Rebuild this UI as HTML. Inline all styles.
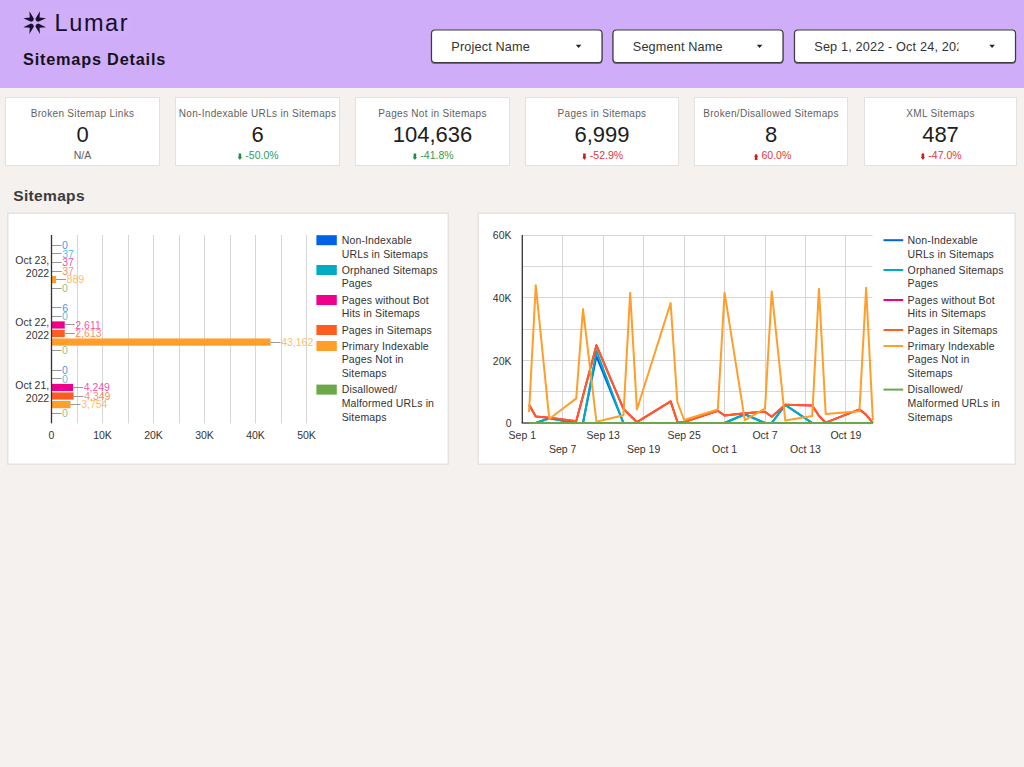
<!DOCTYPE html><html><head><meta charset="utf-8"><style>
html,body{margin:0;padding:0;width:1024px;height:767px;overflow:hidden;background:#f5f1ee;}
svg{display:block;font-family:"Liberation Sans", sans-serif;}
</style></head><body>
<svg width="1024" height="767" viewBox="0 0 1024 767">
<defs><filter id="sh" x="-5%" y="-20%" width="110%" height="150%"><feDropShadow dx="0" dy="1" stdDeviation="0.6" flood-color="#000" flood-opacity="0.45"/></filter></defs>
<rect x="0" y="0" width="1024" height="767" fill="#f5f1ee"/>
<rect x="0" y="0" width="1024" height="88" fill="#cfadf8"/>
<rect x="21" y="9.5" width="109" height="26.5" fill="#d0aff8"/>
<path d="M29.39,11.33 L33.92,18.77 Q33.77,21.47 31.07,21.87 L23.33,18.17 L29.77,17.57 Z" fill="#1a0f2e"/>
<path d="M39.95,11.33 L35.42,18.77 Q35.57,21.47 38.27,21.87 L46.01,18.17 L39.57,17.57 Z" fill="#1a0f2e"/>
<path d="M29.39,34.01 L33.92,26.57 Q33.77,23.87 31.07,23.47 L23.33,27.17 L29.77,27.77 Z" fill="#1a0f2e"/>
<path d="M39.95,34.01 L35.42,26.57 Q35.57,23.87 38.27,23.47 L46.01,27.17 L39.57,27.77 Z" fill="#1a0f2e"/>
<text x="54.6" y="30.8" font-size="23.5" fill="#150d2c" font-weight="normal" text-anchor="start" letter-spacing="1.6" >Lumar</text>
<text x="23" y="65.3" font-size="16.3" fill="#14121c" font-weight="bold" text-anchor="start" letter-spacing="0.8" >Sitemaps Details</text>
<rect x="431.5" y="30" width="170.5" height="32.5" rx="3.5" fill="#ffffff" stroke="#3d3d3d" stroke-width="1.2" filter="url(#sh)"/>
<clipPath id="c431"><rect x="436.5" y="30" width="108.5" height="32"/></clipPath>
<g clip-path="url(#c431)"><text x="451.3" y="51" font-size="12.7" fill="#333333" font-weight="normal" text-anchor="start" letter-spacing="0.15" >Project Name</text></g>
<path d="M575.8000000000001,44.8 L581.4,44.8 L578.6,48 Z" fill="#222"/>
<rect x="613" y="30" width="170" height="32.5" rx="3.5" fill="#ffffff" stroke="#3d3d3d" stroke-width="1.2" filter="url(#sh)"/>
<clipPath id="c613"><rect x="618" y="30" width="108" height="32"/></clipPath>
<g clip-path="url(#c613)"><text x="632.8" y="51" font-size="12.7" fill="#333333" font-weight="normal" text-anchor="start" letter-spacing="0.15" >Segment Name</text></g>
<path d="M756.8000000000001,44.8 L762.4,44.8 L759.6,48 Z" fill="#222"/>
<rect x="794.5" y="30" width="221.0" height="32.5" rx="3.5" fill="#ffffff" stroke="#3d3d3d" stroke-width="1.2" filter="url(#sh)"/>
<clipPath id="c794"><rect x="799.5" y="30" width="159.0" height="32"/></clipPath>
<g clip-path="url(#c794)"><text x="814.3" y="51" font-size="12.7" fill="#333333" font-weight="normal" text-anchor="start" letter-spacing="0.15" >Sep 1, 2022 - Oct 24, 2022</text></g>
<path d="M989.3000000000001,44.8 L994.9,44.8 L992.1,48 Z" fill="#222"/>
<rect x="5.5" y="97.5" width="154" height="68" fill="#fff" stroke="#e2e2e2" stroke-width="1"/>
<text x="82.5" y="116.6" font-size="10" fill="#5f5f5f" font-weight="normal" text-anchor="middle" letter-spacing="0.32" >Broken Sitemap Links</text>
<text x="82.5" y="142.3" font-size="22" fill="#202020" font-weight="normal" text-anchor="middle" letter-spacing="0" >0</text>
<text x="82.5" y="159" font-size="10.5" fill="#5a5a5a" font-weight="normal" text-anchor="middle" letter-spacing="0" >N/A</text>
<rect x="175.5" y="97.5" width="164" height="68" fill="#fff" stroke="#e2e2e2" stroke-width="1"/>
<text x="257.5" y="116.6" font-size="10" fill="#5f5f5f" font-weight="normal" text-anchor="middle" letter-spacing="0.32" >Non-Indexable URLs in Sitemaps</text>
<text x="257.5" y="142.3" font-size="22" fill="#202020" font-weight="normal" text-anchor="middle" letter-spacing="0" >6</text>
<text x="245.3" y="159" font-size="10.5" fill="#2f9a55" font-weight="normal" text-anchor="start" letter-spacing="0" >-50.0%</text>
<path d="M238.60000000000002,153.6 h2.6 v3.3 h0.8 l-2.1,3.2 l-2.1,-3.2 h0.8 z" fill="#1e8e3e"/>
<rect x="355.5" y="97.5" width="154" height="68" fill="#fff" stroke="#e2e2e2" stroke-width="1"/>
<text x="432.5" y="116.6" font-size="10" fill="#5f5f5f" font-weight="normal" text-anchor="middle" letter-spacing="0.32" >Pages Not in Sitemaps</text>
<text x="432.5" y="142.3" font-size="22" fill="#202020" font-weight="normal" text-anchor="middle" letter-spacing="0" >104,636</text>
<text x="420.3" y="159" font-size="10.5" fill="#2f9a55" font-weight="normal" text-anchor="start" letter-spacing="0" >-41.8%</text>
<path d="M413.6,153.6 h2.6 v3.3 h0.8 l-2.1,3.2 l-2.1,-3.2 h0.8 z" fill="#1e8e3e"/>
<rect x="525.5" y="97.5" width="153" height="68" fill="#fff" stroke="#e2e2e2" stroke-width="1"/>
<text x="602.0" y="116.6" font-size="10" fill="#5f5f5f" font-weight="normal" text-anchor="middle" letter-spacing="0.32" >Pages in Sitemaps</text>
<text x="602.0" y="142.3" font-size="22" fill="#202020" font-weight="normal" text-anchor="middle" letter-spacing="0" >6,999</text>
<text x="589.8" y="159" font-size="10.5" fill="#e2363c" font-weight="normal" text-anchor="start" letter-spacing="0" >-52.9%</text>
<path d="M583.0999999999999,153.6 h2.6 v3.3 h0.8 l-2.1,3.2 l-2.1,-3.2 h0.8 z" fill="#c8201f"/>
<rect x="694.5" y="97.5" width="153" height="68" fill="#fff" stroke="#e2e2e2" stroke-width="1"/>
<text x="771.0" y="116.6" font-size="10" fill="#5f5f5f" font-weight="normal" text-anchor="middle" letter-spacing="0.32" >Broken/Disallowed Sitemaps</text>
<text x="771.0" y="142.3" font-size="22" fill="#202020" font-weight="normal" text-anchor="middle" letter-spacing="0" >8</text>
<text x="761.5" y="159" font-size="10.5" fill="#e2363c" font-weight="normal" text-anchor="start" letter-spacing="0" >60.0%</text>
<path d="M754.8,160.1 h2.6 v-3.3 h0.8 l-2.1,-3.2 l-2.1,3.2 h0.8 z" fill="#c8201f"/>
<rect x="864.5" y="97.5" width="152" height="68" fill="#fff" stroke="#e2e2e2" stroke-width="1"/>
<text x="940.5" y="116.6" font-size="10" fill="#5f5f5f" font-weight="normal" text-anchor="middle" letter-spacing="0.32" >XML Sitemaps</text>
<text x="940.5" y="142.3" font-size="22" fill="#202020" font-weight="normal" text-anchor="middle" letter-spacing="0" >487</text>
<text x="928.3" y="159" font-size="10.5" fill="#e2363c" font-weight="normal" text-anchor="start" letter-spacing="0" >-47.0%</text>
<path d="M921.5999999999999,153.6 h2.6 v3.3 h0.8 l-2.1,3.2 l-2.1,-3.2 h0.8 z" fill="#c8201f"/>
<text x="13.2" y="201" font-size="15.5" fill="#3b3b3b" font-weight="bold" text-anchor="start" letter-spacing="0.35" >Sitemaps</text>
<rect x="7.75" y="213.25" width="440.5" height="251" fill="#fff" stroke="#e4e4e4" stroke-width="1.5"/>
<rect x="478.25" y="213.25" width="537" height="251" fill="#fff" stroke="#e4e4e4" stroke-width="1.5"/>
<line x1="77.5" y1="235.0" x2="77.5" y2="423.4" stroke="#d6d6d6" stroke-width="1"/>
<line x1="102.5" y1="235.0" x2="102.5" y2="423.4" stroke="#d6d6d6" stroke-width="1"/>
<line x1="128.5" y1="235.0" x2="128.5" y2="423.4" stroke="#d6d6d6" stroke-width="1"/>
<line x1="153.5" y1="235.0" x2="153.5" y2="423.4" stroke="#d6d6d6" stroke-width="1"/>
<line x1="179.5" y1="235.0" x2="179.5" y2="423.4" stroke="#d6d6d6" stroke-width="1"/>
<line x1="204.5" y1="235.0" x2="204.5" y2="423.4" stroke="#d6d6d6" stroke-width="1"/>
<line x1="230.5" y1="235.0" x2="230.5" y2="423.4" stroke="#d6d6d6" stroke-width="1"/>
<line x1="255.5" y1="235.0" x2="255.5" y2="423.4" stroke="#d6d6d6" stroke-width="1"/>
<line x1="281.5" y1="235.0" x2="281.5" y2="423.4" stroke="#d6d6d6" stroke-width="1"/>
<line x1="306.5" y1="235.0" x2="306.5" y2="423.4" stroke="#d6d6d6" stroke-width="1"/>
<text x="51.5" y="438.5" font-size="10.5" fill="#333" font-weight="normal" text-anchor="middle" letter-spacing="0" >0</text>
<text x="102.5" y="438.5" font-size="10.5" fill="#333" font-weight="normal" text-anchor="middle" letter-spacing="0" >10K</text>
<text x="153.5" y="438.5" font-size="10.5" fill="#333" font-weight="normal" text-anchor="middle" letter-spacing="0" >20K</text>
<text x="204.5" y="438.5" font-size="10.5" fill="#333" font-weight="normal" text-anchor="middle" letter-spacing="0" >30K</text>
<text x="255.5" y="438.5" font-size="10.5" fill="#333" font-weight="normal" text-anchor="middle" letter-spacing="0" >40K</text>
<text x="306.5" y="438.5" font-size="10.5" fill="#333" font-weight="normal" text-anchor="middle" letter-spacing="0" >50K</text>
<text x="49.2" y="263.75" font-size="10.5" fill="#333" font-weight="normal" text-anchor="end" letter-spacing="0" >Oct 23,</text>
<text x="49.2" y="276.95" font-size="10.5" fill="#333" font-weight="normal" text-anchor="end" letter-spacing="0" >2022</text>
<line x1="51.50" y1="245.50" x2="61.50" y2="245.50" stroke="#999" stroke-width="1"/>
<text x="62.10" y="249.07" font-size="10.5" fill="#0062e6" font-weight="normal" text-anchor="start" letter-spacing="0" fill-opacity="0.72">0</text>
<line x1="51.69" y1="253.50" x2="61.69" y2="253.50" stroke="#999" stroke-width="1"/>
<text x="62.29" y="257.62" font-size="10.5" fill="#00acc1" font-weight="normal" text-anchor="start" letter-spacing="0" fill-opacity="0.72">37</text>
<line x1="51.69" y1="262.50" x2="61.69" y2="262.50" stroke="#999" stroke-width="1"/>
<text x="62.29" y="266.18" font-size="10.5" fill="#f0008a" font-weight="normal" text-anchor="start" letter-spacing="0" fill-opacity="0.72">37</text>
<line x1="51.69" y1="271.50" x2="61.69" y2="271.50" stroke="#999" stroke-width="1"/>
<text x="62.29" y="274.72" font-size="10.5" fill="#ff5c1f" font-weight="normal" text-anchor="start" letter-spacing="0" fill-opacity="0.72">37</text>
<rect x="51.5" y="275.97" width="4.51" height="7.2" fill="#ff9e2a"/>
<line x1="56.01" y1="279.50" x2="66.01" y2="279.50" stroke="#999" stroke-width="1"/>
<text x="66.61" y="283.27" font-size="10.5" fill="#ff9e2a" font-weight="normal" text-anchor="start" letter-spacing="0" fill-opacity="0.72">889</text>
<line x1="51.50" y1="288.50" x2="61.50" y2="288.50" stroke="#999" stroke-width="1"/>
<text x="62.10" y="291.82" font-size="10.5" fill="#6aa84a" font-weight="normal" text-anchor="start" letter-spacing="0" fill-opacity="0.72">0</text>
<text x="49.2" y="326.25" font-size="10.5" fill="#333" font-weight="normal" text-anchor="end" letter-spacing="0" >Oct 22,</text>
<text x="49.2" y="339.45" font-size="10.5" fill="#333" font-weight="normal" text-anchor="end" letter-spacing="0" >2022</text>
<line x1="51.53" y1="307.50" x2="61.53" y2="307.50" stroke="#999" stroke-width="1"/>
<text x="62.13" y="311.57" font-size="10.5" fill="#0062e6" font-weight="normal" text-anchor="start" letter-spacing="0" fill-opacity="0.72">6</text>
<line x1="51.50" y1="316.50" x2="61.50" y2="316.50" stroke="#999" stroke-width="1"/>
<text x="62.10" y="320.12" font-size="10.5" fill="#00acc1" font-weight="normal" text-anchor="start" letter-spacing="0" fill-opacity="0.72">0</text>
<rect x="51.5" y="321.38" width="13.25" height="7.2" fill="#f0008a"/>
<line x1="64.75" y1="324.50" x2="74.75" y2="324.50" stroke="#999" stroke-width="1"/>
<text x="75.35" y="328.68" font-size="10.5" fill="#f0008a" font-weight="normal" text-anchor="start" letter-spacing="0" fill-opacity="0.72">2,611</text>
<rect x="51.5" y="329.92" width="13.26" height="7.2" fill="#ff5c1f"/>
<line x1="64.76" y1="333.50" x2="74.76" y2="333.50" stroke="#999" stroke-width="1"/>
<text x="75.36" y="337.22" font-size="10.5" fill="#ff5c1f" font-weight="normal" text-anchor="start" letter-spacing="0" fill-opacity="0.72">2,613</text>
<rect x="51.5" y="338.47" width="219.05" height="7.2" fill="#ff9e2a"/>
<line x1="270.55" y1="342.50" x2="280.55" y2="342.50" stroke="#999" stroke-width="1"/>
<text x="281.15" y="345.77" font-size="10.5" fill="#ff9e2a" font-weight="normal" text-anchor="start" letter-spacing="0" fill-opacity="0.72">43,162</text>
<line x1="51.50" y1="350.50" x2="61.50" y2="350.50" stroke="#999" stroke-width="1"/>
<text x="62.10" y="354.32" font-size="10.5" fill="#6aa84a" font-weight="normal" text-anchor="start" letter-spacing="0" fill-opacity="0.72">0</text>
<text x="49.2" y="388.75" font-size="10.5" fill="#333" font-weight="normal" text-anchor="end" letter-spacing="0" >Oct 21,</text>
<text x="49.2" y="401.95" font-size="10.5" fill="#333" font-weight="normal" text-anchor="end" letter-spacing="0" >2022</text>
<line x1="51.50" y1="370.50" x2="61.50" y2="370.50" stroke="#999" stroke-width="1"/>
<text x="62.10" y="374.07" font-size="10.5" fill="#0062e6" font-weight="normal" text-anchor="start" letter-spacing="0" fill-opacity="0.72">0</text>
<line x1="51.50" y1="378.50" x2="61.50" y2="378.50" stroke="#999" stroke-width="1"/>
<text x="62.10" y="382.62" font-size="10.5" fill="#00acc1" font-weight="normal" text-anchor="start" letter-spacing="0" fill-opacity="0.72">0</text>
<rect x="51.5" y="383.88" width="21.56" height="7.2" fill="#f0008a"/>
<line x1="73.06" y1="387.50" x2="83.06" y2="387.50" stroke="#999" stroke-width="1"/>
<text x="83.66" y="391.18" font-size="10.5" fill="#f0008a" font-weight="normal" text-anchor="start" letter-spacing="0" fill-opacity="0.72">4,249</text>
<rect x="51.5" y="392.42" width="22.07" height="7.2" fill="#ff5c1f"/>
<line x1="73.57" y1="396.50" x2="83.57" y2="396.50" stroke="#999" stroke-width="1"/>
<text x="84.17" y="399.72" font-size="10.5" fill="#ff5c1f" font-weight="normal" text-anchor="start" letter-spacing="0" fill-opacity="0.72">4,349</text>
<rect x="51.5" y="400.97" width="19.05" height="7.2" fill="#ff9e2a"/>
<line x1="70.55" y1="404.50" x2="80.55" y2="404.50" stroke="#999" stroke-width="1"/>
<text x="81.15" y="408.27" font-size="10.5" fill="#ff9e2a" font-weight="normal" text-anchor="start" letter-spacing="0" fill-opacity="0.72">3,754</text>
<line x1="51.50" y1="413.50" x2="61.50" y2="413.50" stroke="#999" stroke-width="1"/>
<text x="62.10" y="416.82" font-size="10.5" fill="#6aa84a" font-weight="normal" text-anchor="start" letter-spacing="0" fill-opacity="0.72">0</text>
<line x1="51.5" y1="235.0" x2="51.5" y2="423.4" stroke="#333" stroke-width="1.3"/>
<rect x="316.4" y="235.2" width="20.4" height="10" fill="#0062e6"/>
<text x="341.7" y="243.80" font-size="10.5" fill="#333" font-weight="normal" text-anchor="start" letter-spacing="0.15" >Non-Indexable</text>
<text x="341.7" y="257.50" font-size="10.5" fill="#333" font-weight="normal" text-anchor="start" letter-spacing="0.15" >URLs in Sitemaps</text>
<line x1="883.5" y1="240.2" x2="903.2" y2="240.2" stroke="#0062e6" stroke-width="2"/>
<text x="907.6" y="243.80" font-size="10.5" fill="#333" font-weight="normal" text-anchor="start" letter-spacing="0.15" >Non-Indexable</text>
<text x="907.6" y="257.50" font-size="10.5" fill="#333" font-weight="normal" text-anchor="start" letter-spacing="0.15" >URLs in Sitemaps</text>
<rect x="316.4" y="265" width="20.4" height="10" fill="#00acc1"/>
<text x="341.7" y="273.60" font-size="10.5" fill="#333" font-weight="normal" text-anchor="start" letter-spacing="0.15" >Orphaned Sitemaps</text>
<text x="341.7" y="287.30" font-size="10.5" fill="#333" font-weight="normal" text-anchor="start" letter-spacing="0.15" >Pages</text>
<line x1="883.5" y1="270" x2="903.2" y2="270" stroke="#00acc1" stroke-width="2"/>
<text x="907.6" y="273.60" font-size="10.5" fill="#333" font-weight="normal" text-anchor="start" letter-spacing="0.15" >Orphaned Sitemaps</text>
<text x="907.6" y="287.30" font-size="10.5" fill="#333" font-weight="normal" text-anchor="start" letter-spacing="0.15" >Pages</text>
<rect x="316.4" y="295" width="20.4" height="10" fill="#f0008a"/>
<text x="341.7" y="303.60" font-size="10.5" fill="#333" font-weight="normal" text-anchor="start" letter-spacing="0.15" >Pages without Bot</text>
<text x="341.7" y="317.30" font-size="10.5" fill="#333" font-weight="normal" text-anchor="start" letter-spacing="0.15" >Hits in Sitemaps</text>
<line x1="883.5" y1="300" x2="903.2" y2="300" stroke="#f0008a" stroke-width="2"/>
<text x="907.6" y="303.60" font-size="10.5" fill="#333" font-weight="normal" text-anchor="start" letter-spacing="0.15" >Pages without Bot</text>
<text x="907.6" y="317.30" font-size="10.5" fill="#333" font-weight="normal" text-anchor="start" letter-spacing="0.15" >Hits in Sitemaps</text>
<rect x="316.4" y="325" width="20.4" height="10" fill="#ff5c1f"/>
<text x="341.7" y="333.60" font-size="10.5" fill="#333" font-weight="normal" text-anchor="start" letter-spacing="0.15" >Pages in Sitemaps</text>
<line x1="883.5" y1="330" x2="903.2" y2="330" stroke="#ff5c1f" stroke-width="2"/>
<text x="907.6" y="333.60" font-size="10.5" fill="#333" font-weight="normal" text-anchor="start" letter-spacing="0.15" >Pages in Sitemaps</text>
<rect x="316.4" y="341" width="20.4" height="10" fill="#ff9e2a"/>
<text x="341.7" y="349.60" font-size="10.5" fill="#333" font-weight="normal" text-anchor="start" letter-spacing="0.15" >Primary Indexable</text>
<text x="341.7" y="363.30" font-size="10.5" fill="#333" font-weight="normal" text-anchor="start" letter-spacing="0.15" >Pages Not in</text>
<text x="341.7" y="377.00" font-size="10.5" fill="#333" font-weight="normal" text-anchor="start" letter-spacing="0.15" >Sitemaps</text>
<line x1="883.5" y1="346" x2="903.2" y2="346" stroke="#ff9e2a" stroke-width="2"/>
<text x="907.6" y="349.60" font-size="10.5" fill="#333" font-weight="normal" text-anchor="start" letter-spacing="0.15" >Primary Indexable</text>
<text x="907.6" y="363.30" font-size="10.5" fill="#333" font-weight="normal" text-anchor="start" letter-spacing="0.15" >Pages Not in</text>
<text x="907.6" y="377.00" font-size="10.5" fill="#333" font-weight="normal" text-anchor="start" letter-spacing="0.15" >Sitemaps</text>
<rect x="316.4" y="384.6" width="20.4" height="10" fill="#6aa84a"/>
<text x="341.7" y="393.20" font-size="10.5" fill="#333" font-weight="normal" text-anchor="start" letter-spacing="0.15" >Disallowed/</text>
<text x="341.7" y="406.90" font-size="10.5" fill="#333" font-weight="normal" text-anchor="start" letter-spacing="0.15" >Malformed URLs in</text>
<text x="341.7" y="420.60" font-size="10.5" fill="#333" font-weight="normal" text-anchor="start" letter-spacing="0.15" >Sitemaps</text>
<line x1="883.5" y1="389.6" x2="903.2" y2="389.6" stroke="#6aa84a" stroke-width="2"/>
<text x="907.6" y="393.20" font-size="10.5" fill="#333" font-weight="normal" text-anchor="start" letter-spacing="0.15" >Disallowed/</text>
<text x="907.6" y="406.90" font-size="10.5" fill="#333" font-weight="normal" text-anchor="start" letter-spacing="0.15" >Malformed URLs in</text>
<text x="907.6" y="420.60" font-size="10.5" fill="#333" font-weight="normal" text-anchor="start" letter-spacing="0.15" >Sitemaps</text>
<line x1="522.3" y1="391.50" x2="872.5" y2="391.50" stroke="#d6d6d6" stroke-width="1"/>
<line x1="522.3" y1="360.50" x2="872.5" y2="360.50" stroke="#d6d6d6" stroke-width="1"/>
<line x1="522.3" y1="329.50" x2="872.5" y2="329.50" stroke="#d6d6d6" stroke-width="1"/>
<line x1="522.3" y1="297.50" x2="872.5" y2="297.50" stroke="#d6d6d6" stroke-width="1"/>
<line x1="522.3" y1="266.50" x2="872.5" y2="266.50" stroke="#d6d6d6" stroke-width="1"/>
<line x1="522.3" y1="235.50" x2="872.5" y2="235.50" stroke="#d6d6d6" stroke-width="1"/>
<line x1="562.50" y1="235.0" x2="562.50" y2="423.0" stroke="#d6d6d6" stroke-width="1"/>
<line x1="603.50" y1="235.0" x2="603.50" y2="423.0" stroke="#d6d6d6" stroke-width="1"/>
<line x1="643.50" y1="235.0" x2="643.50" y2="423.0" stroke="#d6d6d6" stroke-width="1"/>
<line x1="684.50" y1="235.0" x2="684.50" y2="423.0" stroke="#d6d6d6" stroke-width="1"/>
<line x1="724.50" y1="235.0" x2="724.50" y2="423.0" stroke="#d6d6d6" stroke-width="1"/>
<line x1="765.50" y1="235.0" x2="765.50" y2="423.0" stroke="#d6d6d6" stroke-width="1"/>
<line x1="805.50" y1="235.0" x2="805.50" y2="423.0" stroke="#d6d6d6" stroke-width="1"/>
<line x1="845.50" y1="235.0" x2="845.50" y2="423.0" stroke="#d6d6d6" stroke-width="1"/>
<text x="511.5" y="427.20" font-size="10.5" fill="#333" font-weight="normal" text-anchor="end" letter-spacing="0" >0</text>
<text x="511.5" y="364.53" font-size="10.5" fill="#333" font-weight="normal" text-anchor="end" letter-spacing="0" >20K</text>
<text x="511.5" y="301.87" font-size="10.5" fill="#333" font-weight="normal" text-anchor="end" letter-spacing="0" >40K</text>
<text x="511.5" y="239.20" font-size="10.5" fill="#333" font-weight="normal" text-anchor="end" letter-spacing="0" >60K</text>
<text x="522.30" y="438.7" font-size="10.5" fill="#333" font-weight="normal" text-anchor="middle" letter-spacing="0" >Sep 1</text>
<text x="603.20" y="438.7" font-size="10.5" fill="#333" font-weight="normal" text-anchor="middle" letter-spacing="0" >Sep 13</text>
<text x="684.11" y="438.7" font-size="10.5" fill="#333" font-weight="normal" text-anchor="middle" letter-spacing="0" >Sep 25</text>
<text x="765.01" y="438.7" font-size="10.5" fill="#333" font-weight="normal" text-anchor="middle" letter-spacing="0" >Oct 7</text>
<text x="845.92" y="438.7" font-size="10.5" fill="#333" font-weight="normal" text-anchor="middle" letter-spacing="0" >Oct 19</text>
<text x="562.75" y="452.8" font-size="10.5" fill="#333" font-weight="normal" text-anchor="middle" letter-spacing="0" >Sep 7</text>
<text x="643.66" y="452.8" font-size="10.5" fill="#333" font-weight="normal" text-anchor="middle" letter-spacing="0" >Sep 19</text>
<text x="724.56" y="452.8" font-size="10.5" fill="#333" font-weight="normal" text-anchor="middle" letter-spacing="0" >Oct 1</text>
<text x="805.46" y="452.8" font-size="10.5" fill="#333" font-weight="normal" text-anchor="middle" letter-spacing="0" >Oct 13</text>
<line x1="522.3" y1="235.0" x2="522.3" y2="423.0" stroke="#333" stroke-width="1.3"/>
<line x1="521.6999999999999" y1="423.0" x2="529.3" y2="423.0" stroke="#333" stroke-width="1.3"/>
<polyline points="529.04,423.00 535.78,423.00 549.27,418.30 576.24,423.00 582.98,423.00 596.46,356.26 623.43,423.00 630.17,423.00 636.91,423.00 670.62,423.00 677.37,423.00 684.11,423.00 717.82,423.00 724.56,423.00 744.79,414.23 765.01,423.00 771.75,423.00 785.24,404.83 812.21,423.00 818.95,423.00 825.69,423.00 859.40,423.00 866.14,423.00 872.88,423.00" fill="none" stroke="#0062e6" stroke-width="2" stroke-linejoin="round"/>
<polyline points="529.04,423.00 535.78,423.00 549.27,418.30 576.24,423.00 582.98,423.00 596.46,350.93 623.43,423.00 630.17,423.00 636.91,423.00 670.62,423.00 677.37,423.00 684.11,423.00 717.82,423.00 724.56,423.00 744.79,414.23 765.01,423.00 771.75,423.00 785.24,404.83 812.21,423.00 818.95,423.00 825.69,423.00 859.40,423.00 866.14,423.00 872.88,423.00" fill="none" stroke="#00acc1" stroke-width="2" stroke-linejoin="round"/>
<polyline points="529.04,404.83 535.78,416.58 549.27,417.67 576.24,421.21 582.98,395.91 596.46,345.29 623.43,408.90 630.17,415.56 636.91,422.22 670.62,401.38 677.37,421.75 684.11,422.06 717.82,410.78 724.56,415.48 744.79,413.29 765.01,411.72 771.75,416.73 785.24,404.83 812.21,405.45 818.95,415.79 825.69,422.69 859.40,409.37 866.14,414.81 872.88,422.88" fill="none" stroke="#f0008a" stroke-width="2" stroke-linejoin="round"/>
<polyline points="529.04,404.83 535.78,416.58 549.27,417.67 576.24,421.21 582.98,395.91 596.46,345.29 623.43,408.90 630.17,415.56 636.91,422.22 670.62,401.38 677.37,421.75 684.11,422.06 717.82,410.78 724.56,415.48 744.79,413.29 765.01,411.72 771.75,416.73 785.24,404.83 812.21,405.45 818.95,415.79 825.69,422.69 859.40,409.37 866.14,414.81 872.88,422.88" fill="none" stroke="#ff5c1f" stroke-width="2" stroke-linejoin="round"/>
<polyline points="529.04,412.03 535.78,285.13 549.27,418.93 576.24,398.40 582.98,308.95 596.46,421.75 623.43,415.32 630.17,292.65 636.91,409.53 670.62,302.99 677.37,402.01 684.11,420.02 717.82,409.53 724.56,292.65 744.79,420.18 765.01,408.59 771.75,291.40 785.24,420.49 812.21,416.11 818.95,288.89 825.69,413.91 859.40,411.24 866.14,287.76 872.88,420.21" fill="none" stroke="#ff9e2a" stroke-width="2" stroke-linejoin="round"/>
<polyline points="529.04,423.00 535.78,423.00 549.27,423.00 576.24,423.00 582.98,423.00 596.46,423.00 623.43,423.00 630.17,423.00 636.91,423.00 670.62,423.00 677.37,423.00 684.11,423.00 717.82,423.00 724.56,423.00 744.79,423.00 765.01,423.00 771.75,423.00 785.24,423.00 812.21,423.00 818.95,423.00 825.69,423.00 859.40,423.00 866.14,423.00 872.88,423.00" fill="none" stroke="#6aa84a" stroke-width="2" stroke-linejoin="round"/>
</svg></body></html>
